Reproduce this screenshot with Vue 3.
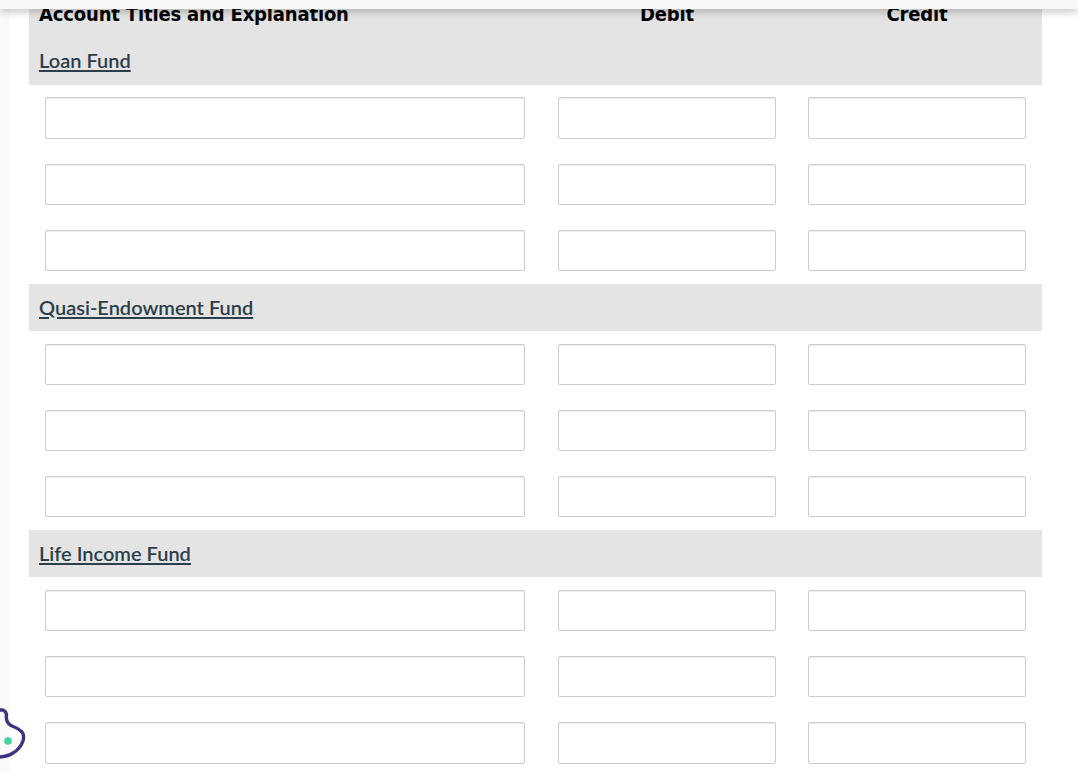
<script setup>
const funds = ['Loan Fund', 'Quasi-Endowment Fund', 'Life Income Fund']
const rows = [1, 2, 3]
</script>

<template>
  <div class="page">
    <div class="topbar"></div>
    <div class="sheet">
      <div class="head">
        <div class="head-first">Account Titles and Explanation</div>
        <div class="head-num">Debit</div>
        <div class="head-num">Credit</div>
      </div>
      <section v-for="fund in funds" :key="fund">
        <div class="band"><u>{{ fund }}</u></div>
        <div v-for="r in rows" :key="r" class="row">
          <div class="cell first"><input type="text" /></div>
          <div class="cell"><input type="text" /></div>
          <div class="cell"><input type="text" /></div>
        </div>
      </section>
    </div>
    <svg class="logo" width="30" height="54" viewBox="0 0 30 54" fill="none">
      <path d="M-3 2 L3 2 Q6 3 6.500 7 Q6 10 7 13 Q8 16 12 18 Q18 20 22 24 Q24.500 27 23 33 Q20 41 13 45 Q7 49 -2 49" stroke="#3b3580" stroke-width="3.400" stroke-linejoin="round" stroke-linecap="round" />
      <circle cx="8" cy="33" r="3.800" fill="#3ed598" />
    </svg>
  </div>
</template>

<style>
html, body { margin: 0; background: #fff; overflow: hidden; }
</style>

<style scoped>
.page {
  position: relative;
  width: 1078px;
  height: 772px;
  overflow: hidden;
  background: #fff;
  box-sizing: border-box;
  padding-left: 29px;
}
.page::before {
  content: "";
  position: absolute;
  left: 0;
  top: 0;
  bottom: 0;
  width: 10px;
  background: #fafafa;
}
.topbar {
  position: absolute;
  left: 0;
  right: 0;
  top: 0;
  height: 9px;
  background: #f8f8f8;
  box-shadow: 0 2px 10px rgba(0, 0, 0, 0.28);
  z-index: 2;
}
.sheet {
  width: 1013px;
}
.head {
  display: grid;
  grid-template-columns: 513px 250px 250px;
  height: 37.4px;
  background: #e4e4e4;
  font-family: "DejaVu Sans", sans-serif;
  font-stretch: condensed;
  font-weight: 700;
  font-size: 20px;
  line-height: 28px;
  letter-spacing: -0.16px;
  color: #000;
}
.head-first { padding-left: 10px; }
.head-num { text-align: center; }
.band {
  height: 47.45px;
  line-height: 47px;
  padding-left: 10px;
  background: #e4e4e4;
  font-family: Lato, sans-serif;
  font-size: 20px;
  font-weight: 600;
  color: #2c3e4a;
}
.band u {
  text-decoration-thickness: 2px;
  text-underline-offset: 2px;
}
.row {
  display: grid;
  grid-template-columns: 513px 250px 250px;
}
.cell {
  padding: 12.5px 16px;
}
.cell.first {
  padding-right: 17px;
}
input {
  display: block;
  width: 100%;
  height: 41.28px;
  box-sizing: border-box;
  border: 1px solid #ccc;
  border-radius: 2px;
  background: #fff;
  box-shadow: inset 0 1px 1px rgba(0, 0, 0, 0.075);
  padding: 0 8px;
  outline: none;
}
.logo {
  position: absolute;
  left: 0;
  top: 708px;
}
</style>
